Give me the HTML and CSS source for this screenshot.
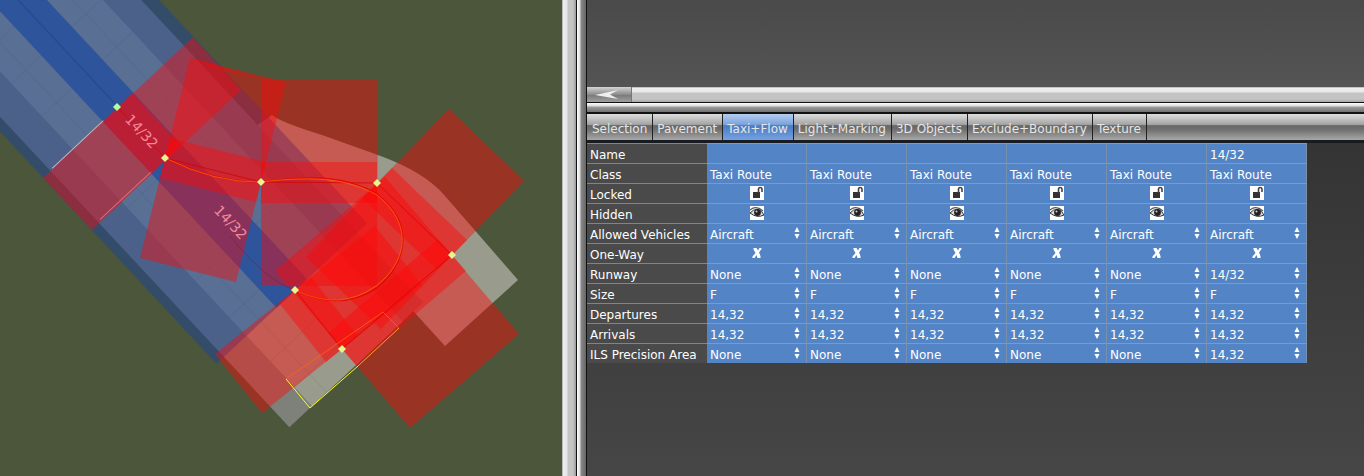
FILE: index.html
```html
<!DOCTYPE html>
<html lang="en">
<head>
    <meta charset="UTF-8">
    <meta name="viewport" content="width=device-width, initial-scale=1.0">
    <title>Airport Editor</title>
    <link rel="stylesheet" href="styles.css">
</head>
<body>
    <!-- icons used in the table -->
    <svg class="icon-defs" aria-hidden="true">
        <symbol id="icon-unlock" viewBox="0 0 14 14">
            <rect width="14" height="14" fill="#fff"/>
            <path d="M3 6h7v6H3z" fill="#333"/>
            <path d="M8.500 7V3.500Q8.500 1.500 10.200 1.500T12 3.500V6" fill="none" stroke="#444" stroke-width="1.600"/>
        </symbol>
        <symbol id="icon-eye" viewBox="0 0 14 14">
            <rect width="14" height="14" fill="#fff"/>
            <path d="M0 4Q6 -1 13 5" fill="none" stroke="#555" stroke-width="1.200"/>
            <path d="M0 7Q3 3 8 3.500Q12 4.500 14 9Q7 12.500 0 7z" fill="#ddd" stroke="#333" stroke-width="1"/>
            <circle cx="7.500" cy="6.500" r="3.400" fill="#222"/>
            <circle cx="6.500" cy="5.500" r="1" fill="#ccc"/>
        </symbol>
        <symbol id="icon-updown" viewBox="0 0 6 12">
            <path d="M3 0L5.500 5h-5zM.5 7h5L3 12z" fill="#fff"/>
        </symbol>
        <symbol id="icon-cross" viewBox="0 0 10 10">
            <path d="M1.500 0H4.500L6 2.500L7.500 0H9.500V1L7 4.500L8.500 8V10H5.500L4.500 7L2.500 10H.5V8.500L3.500 5L1.500 1.500z" fill="#fff"/>
        </symbol>
    </svg>

    <main class="editor">
        <section class="map">
            <svg class="map-view" viewBox="0 0 562 476" preserveAspectRatio="xMinYMin slice" role="img" aria-label="Runway 14/32">
                <rect width="562" height="476" fill="#4c563b"/>
                <!-- pavement -->
                <path d="M256 126L272 115Q280 122 322 135L378 155Q425 172 445 196L518 280L445 346L385 280L300 250z" fill="#999c8d"/>
                <g transform="translate(118 107) rotate(47)">
                    <rect x="-300" y="-90" width="651" height="183" fill="#7e817a"/>
                    <rect x="-300" y="-62" width="651" height="124" fill="#999c8d"/>
                    <g stroke="#808578" stroke-opacity=".35" stroke-width="1">
                        <path d="M-300 -40H351M-300 42H351M-300 75H351M-300 -76H351"/>
                        <path d="M-130 -90V90M-90 -90V90M-45 -90V90M30 -90V90M80 -90V90M130 -90V90M180 -90V90M230 -90V90M290 -90V90M325 -90V90"/>
                    </g>
                    <!-- runway -->
                    <rect x="-300" y="-103" width="555" height="206" fill="#1a4199" fill-opacity=".5"/>
                    <rect x="-300" y="-21" width="555" height="42" fill="#1c489e" fill-opacity=".7"/>
                    <path d="M-300 0H0" stroke="#24478c"/>
                    <path d="M0 20V90M70 20V90" stroke="#c9b4be"/>
                </g>
                <!-- taxi routes, wing span and wheel base -->
                <g class="route">
                    <path d="M43 178L193 37L241 90L92 230z"/>
                    <path d="M103 122L132 93L180 145L151 173z"/>
                    <path d="M190 58L286 82L236 282L140 258z"/>
                    <path d="M170 138L266 162L256 202L160 178z"/>
                    <path d="M190 58Q240 79 274 79H378L377 286H261V79z"/>
                    <path d="M261 162H377V203H261z"/>
                    <path d="M449 109L524 181L381 329L306 257z"/>
                    <path d="M392 168L467 240L437 270L362 198z"/>
                    <path d="M519 334L410 428L275 271L385 177z"/>
                    <path d="M466 271L356 365L328 333L438 239z"/>
                    <path d="M262 413L215 354L375 226L422 285z"/>
                    <path d="M326 362L279 303L311 277L358 336z"/>
                </g>
                <path d="M117 107L165 158L261 182L377 183L452 255L342 349L295 290" fill="none" stroke="#d00000" stroke-opacity=".7"/>
                <path d="M295 290Q265 280 230 236" fill="none" stroke="#8c1830" stroke-opacity=".6"/>
                <path d="M165 158Q215 182 261 182C320 174 350 178 377 194C417 225 405 265 377 288Q340 312 295 290" fill="none" stroke="#e80808" stroke-width="1.500"/>
                <path d="M165 158Q215 183 261 182C320 175 350 180 377 195C416 226 405 264 376 286Q340 312 295 290" fill="none" stroke="#ff9a00" stroke-opacity=".7" stroke-width=".7"/>
                <path d="M286 379L383 312L399 328" fill="none" stroke="#ff6a10" stroke-opacity=".7"/>
                <path d="M286 379L310 408L358 366" fill="none" stroke="#ffff20"/>
                <path d="M358 366L399 328" fill="none" stroke="#ffa020"/>
                <g class="map-label">
                    <text transform="translate(141 132) rotate(47)">14/32</text>
                    <text transform="translate(230 223) rotate(47)">14/32</text>
                </g>
                <g fill="#e6f58c">
                    <path d="M117 103L121 107L117 111L113 107z" fill="#b4ff9c"/>
                    <path d="M165 154L169 158L165 162L161 158z"/>
                    <path d="M261 178L265 182L261 186L257 182z"/>
                    <path d="M377 179L381 183L377 187L373 183z"/>
                    <path d="M452 251L456 255L452 259L448 255z"/>
                    <path d="M295 286L299 290L295 294L291 290z"/>
                    <path d="M342 345L346 349L342 353L338 349z"/>
                </g>
            </svg>
        </section>
        <div class="scroll-v"></div>
        <div class="divider-v"></div>
        <section class="side">
            <div class="preview"></div>
            <div class="scroll-h">
                <button class="scroll-left" type="button" aria-label="Scroll left">
                    <svg viewBox="0 0 28 10" aria-hidden="true"><path d="M0 5L23 0L15 4.500L23 9z" fill="#eee"/></svg>
                </button>
            </div>
            <div class="divider-h"></div>
            <nav class="tabs">
                <button type="button">Selection</button>
                <button type="button">Pavement</button>
                <button type="button" class="active">Taxi+Flow</button>
                <button type="button">Light+Marking</button>
                <button type="button">3D Objects</button>
                <button type="button">Exclude+Boundary</button>
                <button type="button">Texture</button>
            </nav>
            <div class="panel">
                <table class="props" id="props"></table>
            </div>
        </section>
    </main>
    <script src="script.js"></script>
</body>
</html>
```
FILE: styles.css
```css
* {
    box-sizing: border-box;
}
body {
    margin: 0;
    font-family: "DejaVu Sans", Verdana, sans-serif;
    font-size: 12px;
    color: #fff;
    background-color: #404040;
}
button, select {
    font: inherit;
    color: inherit;
}
.icon-defs {
    display: none;
}
.editor {
    display: grid;
    grid-template-columns: 562fr 15px 10px 777fr;
    min-height: 100vh;
}

/* map */
.map {
    position: relative;
    overflow: hidden;
    background-color: #4c563b;
}
.map-view {
    position: absolute;
    width: 100%;
    height: 100%;
}
.route {
    fill: #ff0808;
    fill-opacity: 0.43;
}
.map-label {
    fill: #f58a9c;
    font-size: 14px;
    text-anchor: middle;
    dominant-baseline: middle;
}

/* bars between the panes */
.scroll-v {
    background: linear-gradient(to right, #888 0, #eee 1px, #e4e4e4 5px, #c4c4c4 6px, #c4c4c4 11px, #999 14px, #111 14px);
}
.divider-v {
    border-right: 1px solid #111;
    background: linear-gradient(to right, #fff 0, #ddd 3px, #888 4px, #666);
}
.scroll-h {
    display: flex;
    height: 15px;
    background: linear-gradient(#999 0, #eee 1px, #e8e8e8 5px, #c4c4c4 6px, #c4c4c4 12px, #aaa);
}
.scroll-left {
    display: flex;
    align-items: center;
    justify-content: center;
    width: 45px;
    padding: 0;
    border: 0;
    border-right: 1px solid #777;
    background: linear-gradient(#d4d4d4, #8c8c8c 50%, #777 51%, #a0a0a0);
}
.scroll-left svg {
    width: 28px;
    height: 10px;
}
.divider-h {
    height: 12px;
    border-top: 1px solid #111;
    border-bottom: 2px solid #111;
    background: linear-gradient(#fff, #ddd 30%, #999 50%, #707070);
}

/* right side */
.side {
    display: flex;
    flex-direction: column;
    min-width: 0;
}
.preview {
    height: 87px;
    background: linear-gradient(#4a4a4a, #545454);
}
.tabs {
    display: flex;
    height: 29px;
    padding-left: 1px;
    border-bottom: 3px solid #181c22;
    background: linear-gradient(#ddd, #a4a4a4 40%, #666 45%, #707070 60%, #a8a8a8);
}
.tabs button {
    padding: 4px 5px 0 4px;
    border: 0;
    border-right: 1px solid #222;
    background: none;
    color: #e6e6e6;
    white-space: nowrap;
}
.tabs button.active {
    background: linear-gradient(#b4cdf0, #7ba3dd 40%, #4a7cc4 45%, #5485ca 60%, #74a2e4);
}
.panel {
    flex: 1;
    background: linear-gradient(#343434, #464646);
}

/* properties table */
.props {
    border-collapse: separate;
    border-spacing: 0;
    table-layout: fixed;
    width: 720px;
}
.props th {
    width: 120px;
    height: 20px;
    padding: 2px 0 0 3px;
    border-top: 1px solid #848484;
    background-color: #4a4a4a;
    font-weight: normal;
    text-align: left;
    line-height: 16px;
}
.props td {
    height: 20px;
    padding: 2px 3px 0;
    border-top: 1px solid #8a98a8;
    border-right: 1px solid #7890ac;
    background-color: #5384c6;
    line-height: 16px;
}
.picker {
    display: flex;
    align-items: center;
    justify-content: space-between;
    height: 16px;
    padding-right: 3px;
}
.picker select {
    flex: 1;
    height: 16px;
    padding: 0;
    border: 0;
    background: none;
    appearance: none;
}
.picker svg {
    width: 6px;
    height: 12px;
    margin-bottom: 4px;
}
.toggle {
    display: flex;
    align-items: center;
    justify-content: center;
    width: 100%;
    height: 16px;
    padding: 0 0 3px;
    border: 0;
    background: none;
}
.toggle svg {
    flex: none;
    width: 14px;
    height: 14px;
}
.toggle input {
    width: 0;
    height: 0;
    margin: 0;
    appearance: none;
}
.toggle .cross {
    width: 10px;
    height: 10px;
}
```
FILE: script.js
```js
// one entry per selected taxi route
const none = ['None', 'None', 'None', 'None', 'None'];
const fill = (value) => Array(6).fill(value);

const rows = [
    { label: 'Name', type: 'text', values: ['', '', '', '', '', '14/32'] },
    { label: 'Class', type: 'text', values: fill('Taxi Route') },
    { label: 'Locked', type: 'button', icon: 'unlock', values: fill('') },
    { label: 'Hidden', type: 'button', icon: 'eye', values: fill('') },
    { label: 'Allowed Vehicles', type: 'select', values: fill('Aircraft') },
    { label: 'One-Way', type: 'check', values: fill('') },
    { label: 'Runway', type: 'select', values: [...none, '14/32'] },
    { label: 'Size', type: 'select', values: fill('F') },
    { label: 'Departures', type: 'select', values: fill('14,32') },
    { label: 'Arrivals', type: 'select', values: fill('14,32') },
    { label: 'ILS Precision Area', type: 'select', values: [...none, '14,32'] }
];

function cell(row, value, i) {
    const name = `${row.label} ${i + 1}`;
    if (row.type === 'select') {
        return `<div class="picker"><select aria-label="${name}"><option>${value}</option></select><svg><use href="#icon-updown"/></svg></div>`;
    }
    if (row.type === 'button') {
        return `<button type="button" class="toggle" aria-label="${name}"><svg><use href="#icon-${row.icon}"/></svg></button>`;
    }
    if (row.type === 'check') {
        return `<label class="toggle"><input type="checkbox" aria-label="${name}"><svg class="cross"><use href="#icon-cross"/></svg></label>`;
    }
    return value;
}

document.getElementById('props').innerHTML = rows.map(row =>
    `<tr><th scope="row">${row.label}</th>${row.values.map((v, i) => `<td>${cell(row, v, i)}</td>`).join('')}</tr>`
).join('');
```
